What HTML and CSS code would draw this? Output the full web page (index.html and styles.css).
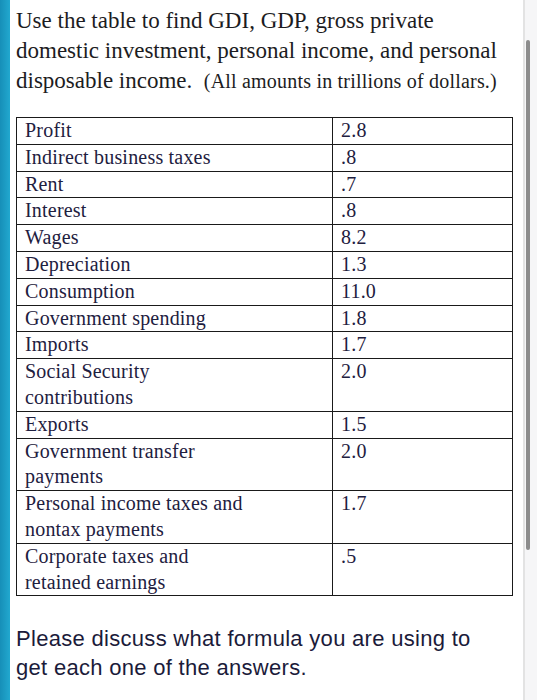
FILE: index.html
```html
<!DOCTYPE html>
<html>
<head>
<meta charset="utf-8">
<link rel="stylesheet" href="styles.css">
</head>
<body>
<div class="frame">
  <div class="stripe"></div>
  <main class="content">
    <p class="question">Use the table to find GDI, GDP, gross private<br>domestic investment, personal income, and personal<br>disposable income. &nbsp;<span class="note">(All amounts in trillions of dollars.)</span></p>
    <table class="data">
      <tr><td class="label">Profit</td><td class="value">2.8</td></tr>
      <tr><td class="label">Indirect business taxes</td><td class="value">.8</td></tr>
      <tr><td class="label">Rent</td><td class="value">.7</td></tr>
      <tr><td class="label">Interest</td><td class="value">.8</td></tr>
      <tr><td class="label">Wages</td><td class="value">8.2</td></tr>
      <tr><td class="label">Depreciation</td><td class="value">1.3</td></tr>
      <tr><td class="label">Consumption</td><td class="value">11.0</td></tr>
      <tr><td class="label">Government spending</td><td class="value">1.8</td></tr>
      <tr><td class="label">Imports</td><td class="value">1.7</td></tr>
      <tr><td class="label">Social Security<br>contributions</td><td class="value">2.0</td></tr>
      <tr><td class="label">Exports</td><td class="value">1.5</td></tr>
      <tr><td class="label">Government transfer<br>payments</td><td class="value">2.0</td></tr>
      <tr><td class="label">Personal income taxes and<br>nontax payments</td><td class="value">1.7</td></tr>
      <tr><td class="label">Corporate taxes and<br>retained earnings</td><td class="value">.5</td></tr>
    </table>
    <p class="prompt">Please discuss what formula you are using to<br>get each one of the answers.</p>
  </main>
  <div class="rail"><div class="thumb"></div></div>
</div>
</body>
</html>
```

FILE: styles.css
```css
* { box-sizing: border-box; }
html, body { margin: 0; padding: 0; background: #ffffff; }
.frame {
  display: flex;
  height: 700px;
  overflow: hidden;
}
.stripe {
  width: 10px;
  flex: none;
  background: linear-gradient(to right, #168fb8, #22a8cf);
}
.content {
  width: 515px;
  flex: none;
  padding: 6px 0 0 6px;
  background: #ffffff;
  border-right: 2px solid #e3e3e3;
}
.question {
  margin: 0 0 21px 0;
  font-family: "Liberation Serif", "Times New Roman", serif;
  font-size: 23px;
  line-height: 30px;
  color: #1c1c22;
  white-space: nowrap;
}
.note { font-size: 20px; letter-spacing: 0.2px; }
.data {
  width: 497px;
  border-collapse: collapse;
  font-family: "Liberation Serif", "Times New Roman", serif;
  font-size: 20px;
  letter-spacing: 0.2px;
  line-height: 25.8px;
  color: #1e2040;
}
.data td {
  border: 1px solid #1a1a1a;
  padding: 0 0 0 8px;
  vertical-align: top;
}
.data .label { width: 316px; }
.prompt {
  margin: 28px 0 0 0;
  font-family: "Liberation Sans", Arial, sans-serif;
  font-size: 22px;
  letter-spacing: 0.3px;
  line-height: 29px;
  color: #1b1b3a;
  white-space: nowrap;
}
.rail {
  flex: 1;
  background: #f6f6f7;
}
.thumb {
  width: 4px;
  height: 510px;
  margin: 40px 0 0 1px;
  border-radius: 2px;
  background: #8c8c8c;
}
```
